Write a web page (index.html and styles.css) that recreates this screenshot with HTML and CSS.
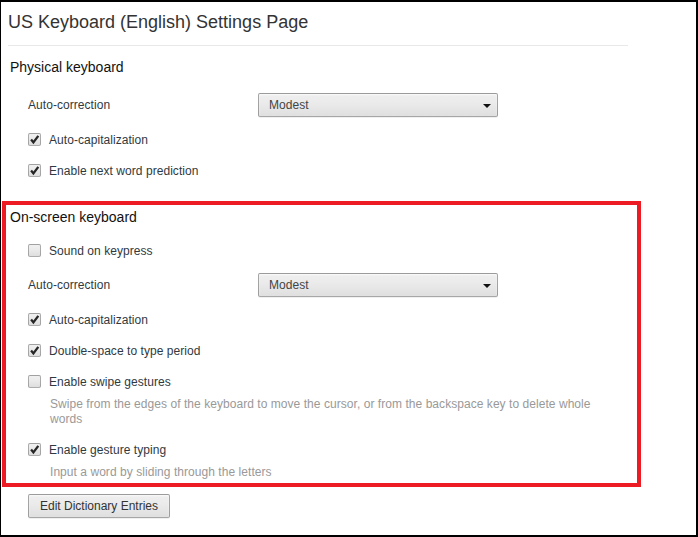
FILE: index.html
```html
<!DOCTYPE html>
<html>
<head>
<meta charset="utf-8">
<link rel="stylesheet" href="styles.css">
</head>
<body>
<div class="frame">
  <h1 class="title">US Keyboard (English) Settings Page</h1>
  <div class="rule"></div>

  <div class="section physical">
    <h2 class="section-title">Physical keyboard</h2>
    <div class="rows">
      <div class="row row-select">
        <span class="select-label">Auto-correction</span>
        <div class="select"><span>Modest</span><span class="arrow"></span></div>
      </div>
      <div class="row">
        <span class="cb checked"><svg viewBox="0 0 13 13" width="13" height="13"><path d="M3.1 6.6 L5.4 9.4 L10.3 2.9" fill="none" stroke="#262626" stroke-width="2.3" stroke-linejoin="miter"/></svg></span>
        <span>Auto-capitalization</span>
      </div>
      <div class="row">
        <span class="cb checked"><svg viewBox="0 0 13 13" width="13" height="13"><path d="M3.1 6.6 L5.4 9.4 L10.3 2.9" fill="none" stroke="#262626" stroke-width="2.3" stroke-linejoin="miter"/></svg></span>
        <span>Enable next word prediction</span>
      </div>
    </div>
  </div>

  <div class="section onscreen">
    <h2 class="section-title">On-screen keyboard</h2>
    <div class="rows rows-onscreen">
      <div class="row">
        <span class="cb"></span>
        <span>Sound on keypress</span>
      </div>
      <div class="row row-select">
        <span class="select-label">Auto-correction</span>
        <div class="select"><span>Modest</span><span class="arrow"></span></div>
      </div>
      <div class="row">
        <span class="cb checked"><svg viewBox="0 0 13 13" width="13" height="13"><path d="M3.1 6.6 L5.4 9.4 L10.3 2.9" fill="none" stroke="#262626" stroke-width="2.3" stroke-linejoin="miter"/></svg></span>
        <span>Auto-capitalization</span>
      </div>
      <div class="row">
        <span class="cb checked"><svg viewBox="0 0 13 13" width="13" height="13"><path d="M3.1 6.6 L5.4 9.4 L10.3 2.9" fill="none" stroke="#262626" stroke-width="2.3" stroke-linejoin="miter"/></svg></span>
        <span>Double-space to type period</span>
      </div>
      <div class="row">
        <span class="cb"></span>
        <span>Enable swipe gestures</span>
      </div>
      <div class="desc">Swipe from the edges of the keyboard to move the cursor, or from the backspace key to delete whole words</div>
      <div class="row row-after-desc">
        <span class="cb checked"><svg viewBox="0 0 13 13" width="13" height="13"><path d="M3.1 6.6 L5.4 9.4 L10.3 2.9" fill="none" stroke="#262626" stroke-width="2.3" stroke-linejoin="miter"/></svg></span>
        <span>Enable gesture typing</span>
      </div>
      <div class="desc">Input a word by sliding through the letters</div>
    </div>
  </div>

  <button class="btn" type="button">Edit Dictionary Entries</button>
</div>
</body>
</html>
```

FILE: styles.css
```css
html, body {
  margin: 0;
  padding: 0;
  background: #fff;
}

body {
  font-family: "Liberation Sans", Arial, sans-serif;
}

.frame {
  width: 698px;
  height: 537px;
  box-sizing: border-box;
  border: 2px solid #000;
  border-left-width: 1px;
  padding: 8px 0 0 7px;
  overflow: hidden;
  background: #fff;
}

.title {
  margin: 0;
  font-size: 18px;
  font-weight: normal;
  line-height: 24px;
  height: 24px;
  color: #333;
}

.rule {
  width: 620px;
  height: 1px;
  background: #e8e8e8;
  margin-top: 11px;
}

.section-title {
  margin: 0;
  font-size: 14px;
  font-weight: normal;
  line-height: 20px;
  height: 20px;
  color: #111;
}

.physical {
  width: 618px;
  padding-left: 2px;
  margin-top: 11px;
}

.rows {
  padding-left: 18px;
  margin-top: 9px;
}

.rows-onscreen {
  margin-top: 8px;
}

.row {
  height: 31px;
  display: flex;
  align-items: center;
  font-size: 12px;
  letter-spacing: 0.05px;
  color: #303942;
}

.row-select {
  height: 38px;
}

.row-after-desc {
  margin-top: 7px;
}

.select-label {
  width: 230px;
  flex: none;
}

.select {
  width: 240px;
  height: 24px;
  box-sizing: border-box;
  border: 1px solid rgba(0, 0, 0, 0.3);
  border-radius: 2px;
  background: linear-gradient(#efefef, #ebebeb 40%, #dfdfdf);
  box-shadow: 0 1px 0 rgba(0, 0, 0, 0.06), inset 0 1px 2px rgba(255, 255, 255, 0.75);
  display: flex;
  align-items: center;
  justify-content: space-between;
  padding: 0 6px 0 10px;
  color: #444;
  font-size: 12px;
}

.arrow {
  width: 0;
  height: 0;
  border-left: 4px solid transparent;
  border-right: 4px solid transparent;
  border-top: 4px solid #111;
  margin-top: 1px;
}

.cb {
  width: 13px;
  height: 13px;
  box-sizing: border-box;
  flex: none;
  border: 1px solid rgba(0, 0, 0, 0.28);
  border-radius: 2px;
  background: linear-gradient(#f0f0f0, #ebebeb 40%, #dedede);
  margin-right: 8px;
  position: relative;
}

.cb svg {
  position: absolute;
  left: -1px;
  top: -1px;
}

.desc {
  padding-left: 22px;
  padding-right: 20px;
  font-size: 12px;
  line-height: 15px;
  letter-spacing: 0.05px;
  color: #999;
}

.onscreen {
  width: 639px;
  box-sizing: border-box;
  margin-left: -6px;
  margin-top: 15px;
  border: 4px solid #ed1c24;
  padding: 2px 9px 3px 4px;
}

.btn {
  display: block;
  margin: 7px 0 0 20px;
  height: 24px;
  padding: 0 11px;
  border: 1px solid rgba(0, 0, 0, 0.3);
  border-radius: 2px;
  background: linear-gradient(#efefef, #ebebeb 40%, #dfdfdf);
  box-shadow: 0 1px 0 rgba(0, 0, 0, 0.06), inset 0 1px 2px rgba(255, 255, 255, 0.75);
  font-family: "Liberation Sans", Arial, sans-serif;
  font-size: 12px;
  color: #333;
}
```
